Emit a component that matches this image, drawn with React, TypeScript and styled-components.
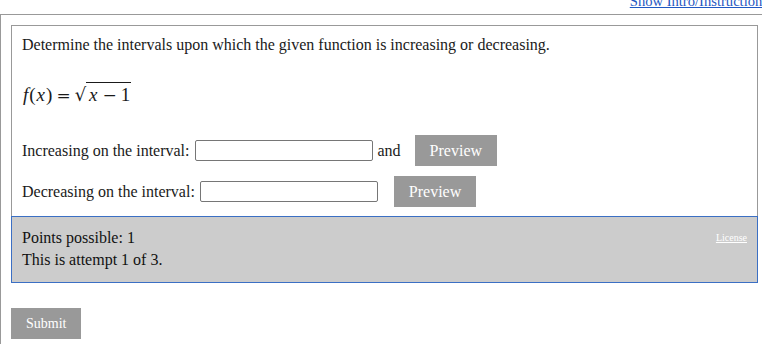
import styled, { createGlobalStyle } from 'styled-components';

const GlobalStyle = createGlobalStyle`
  html, body {
    margin: 0;
    padding: 0;
    overflow: hidden;
    background: #fff;
  }
  body {
    font-family: "Liberation Serif", "Times New Roman", serif;
    font-size: 16px;
    color: #1a1a1a;
  }
`;

const Page = styled.div`
  width: 762px;
`;

const TopBar = styled.div`
  height: 14px;
  display: flex;
  justify-content: flex-end;
  margin-right: -6px;
`;

const IntroLink = styled.a`
  display: block;
  margin-top: -7px;
  font-size: 14.6px;
  line-height: 17px;
  color: #1f58c2;
  text-decoration: underline;
  white-space: nowrap;
  cursor: pointer;
`;

const Outer = styled.div`
  box-sizing: border-box;
  width: 764px;
  border: 1px solid #999;
  padding: 10px 5px 10px 10px;
`;

const Question = styled.div`
  border: 1px solid #999;
  border-bottom: none;
  padding: 10px 10px 9px;
  display: flex;
  flex-direction: column;
`;

const Prompt = styled.p`
  margin: 0;
  line-height: 18px;
`;

const MathLine = styled.div`
  margin: 28px 0 29px;
  font-family: "Liberation Serif", "Times New Roman", serif;
  font-size: 19px;
  line-height: 22px;
  display: flex;
  align-items: baseline;
  white-space: pre;
`;

const MathVar = styled.span`
  font-family: "Liberation Serif", "Times New Roman", serif;
  font-style: italic;
  padding: 0 1px;
`;

const Operator = styled.span`
  font-family: "DejaVu Serif", serif;
  font-size: 17px;
  margin: 0 4px;
`;

const Radical = styled.span`
  font-family: "DejaVu Serif", serif;
  font-size: 18px;
`;

const Radicand = styled.span`
  border-top: 1px solid #1a1a1a;
  padding: 1px 1px 0 2px;
`;

const FieldRow = styled.div<{ $gap?: number }>`
  display: flex;
  align-items: center;
  height: 31px;
  margin-top: ${(p) => p.$gap ?? 0}px;
`;

const Label = styled.span`
  margin-right: 5px;
`;

const TextInput = styled.input`
  box-sizing: border-box;
  width: 178px;
  height: 21px;
  border: 1px solid #767676;
  border-radius: 2px;
  padding: 1px 2px;
  font: inherit;
`;

const Joiner = styled.span`
  margin-left: 5px;
`;

const GrayButton = styled.button<{ $offset?: number; $small?: boolean }>`
  height: 31px;
  padding: 0 15px;
  margin-left: ${(p) => p.$offset ?? 0}px;
  border: none;
  background: #999;
  color: #fff;
  font-family: "Liberation Serif", "Times New Roman", serif;
  font-size: ${(p) => (p.$small ? 14 : 16)}px;
  cursor: pointer;
`;

const Footer = styled.div`
  border: 1px solid #3b6fc4;
  background: #ccc;
  padding: 10px 10px 11px;
  line-height: 22px;
  color: #111;
`;

const FooterLine = styled.div`
  display: flex;
  justify-content: space-between;
  align-items: center;
`;

const License = styled.a`
  font-size: 10px;
  color: #fff;
  text-decoration: underline;
  cursor: pointer;
`;

const SubmitArea = styled.div`
  margin-top: 25px;
  display: flex;
`;

export default function App() {
  return (
    <Page>
      <GlobalStyle />
      <TopBar>
        <IntroLink>Show Intro/Instructions</IntroLink>
      </TopBar>
      <Outer>
        <Question>
          <Prompt>
            Determine the intervals upon which the given function is increasing or decreasing.
          </Prompt>
          <MathLine>
            <MathVar>f</MathVar>(<MathVar>x</MathVar>)<Operator>=</Operator>
            <Radical>√</Radical>
            <Radicand>
              <MathVar>x</MathVar>
              <Operator>−</Operator>1
            </Radicand>
          </MathLine>
          <FieldRow>
            <Label>Increasing on the interval:</Label>
            <TextInput type='text' />
            <Joiner>and</Joiner>
            <GrayButton $offset={14}>Preview</GrayButton>
          </FieldRow>
          <FieldRow $gap={10}>
            <Label>Decreasing on the interval:</Label>
            <TextInput type='text' />
            <GrayButton $offset={16}>Preview</GrayButton>
          </FieldRow>
        </Question>
        <Footer>
          <FooterLine>
            <span>Points possible: 1</span>
            <License>License</License>
          </FooterLine>
          <FooterLine>
            <span>This is attempt 1 of 3.</span>
          </FooterLine>
        </Footer>
        <SubmitArea>
          <GrayButton $small>Submit</GrayButton>
        </SubmitArea>
      </Outer>
    </Page>
  );
}
